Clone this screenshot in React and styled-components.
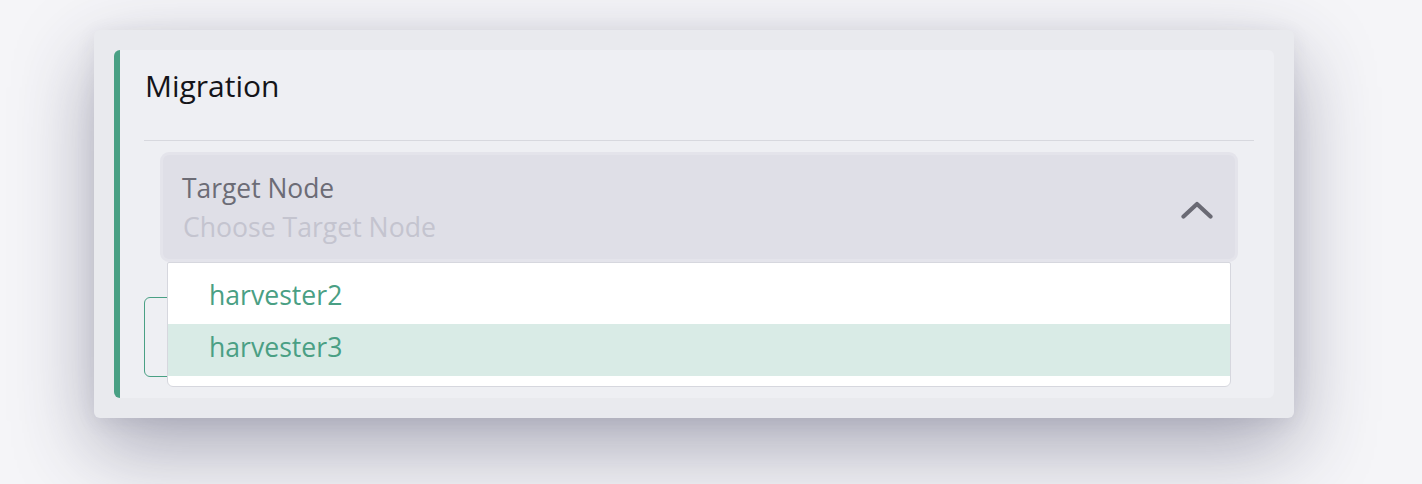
import React from 'react'
import styled, { createGlobalStyle } from 'styled-components'

const GlobalStyle = createGlobalStyle`
body {
    margin: 0;
    background-color: #f5f5f8;
    font-family: 'Open Sans', 'Noto Sans', sans-serif;
}
* {
    box-sizing: border-box;
}
`

const Page = styled.div`
height: 484px;
padding: 30px 0 0 94px;
overflow: hidden;
`

const Modal = styled.div`
width: 1200px;
height: 388px;
padding: 20px;
background-color: #e9eaee;
border-radius: 6px;
box-shadow: 0 30px 80px rgba(45, 45, 80, 0.38), 0 4px 20px rgba(45, 45, 80, 0.08);
`

const Card = styled.section`
height: 348px;
padding: 0 20px 0 24px;
background-color: #eeeff3;
border-left: 6px solid #49a084;
border-radius: 6px;
`

const Header = styled.div`
padding: 16px 0 34px 1px;
border-bottom: 1px solid #d7d8de;
h3 {
    margin: 0;
    font-size: 30px;
    line-height: 40px;
    font-weight: 400;
    color: #141419;
}
`

const Body = styled.div`
padding: 11px 16px 0;
`

const SelectWrap = styled.div`
position: relative;
`

const Select = styled.div`
display: flex;
align-items: flex-start;
justify-content: space-between;
height: 110px;
padding: 17px 22px 0 19px;
background-color: #dfdfe7;
border: 3px solid #e4e4eb;
border-radius: 9px;
.label {
    font-size: 26.4px;
    line-height: 32px;
    color: #6c6c76;
}
.placeholder {
    margin-top: 7px;
    padding-left: 1px;
    font-size: 26.6px;
    line-height: 32px;
    color: #c4c4cf;
}
svg {
    margin-top: 28px;
}
`

const Dropdown = styled.ul`
position: absolute;
top: 110px;
left: 7px;
right: 7px;
margin: 0;
padding: 9px 0 10px;
list-style: none;
background-color: #ffffff;
border: 1px solid #d6d7de;
border-radius: 2px 2px 6px 6px;
z-index: 10;
`

const Option = styled.li`
height: 52px;
padding: 0 0 6px 41px;
font-size: 26.6px;
line-height: 46px;
color: #4a9f84;
background-color: ${props => props.active ? '#d9ebe6' : 'transparent'};
`

const OutlineButton = styled.button`
display: block;
width: 220px;
height: 80px;
margin: 35px 0 0 -16px;
background: transparent;
border: 1px solid #49a084;
border-radius: 6px;
`

const Chevron = () => (
    <svg width="32" height="20" viewBox="0 0 32 20" fill="none">
        <path d="M2.5 16.5 L16 4 L29.5 16.5" stroke="#6a6a74" strokeWidth="4.2" strokeLinecap="round" strokeLinejoin="round" />
    </svg>
)

export default function App() {
    const nodes = ['harvester2', 'harvester3']
    return (
        <>
            <GlobalStyle />
            <Page>
                <Modal>
                    <Card>
                        <Header>
                            <h3>Migration</h3>
                        </Header>
                        <Body>
                            <SelectWrap>
                                <Select>
                                    <div>
                                        <div className="label">Target Node</div>
                                        <div className="placeholder">Choose Target Node</div>
                                    </div>
                                    <Chevron />
                                </Select>
                                <Dropdown>
                                    {nodes.map(n => (
                                        <Option key={n} active={n === 'harvester3'}>{n}</Option>
                                    ))}
                                </Dropdown>
                            </SelectWrap>
                            <OutlineButton aria-label="Cancel" />
                        </Body>
                    </Card>
                </Modal>
            </Page>
        </>
    )
}
